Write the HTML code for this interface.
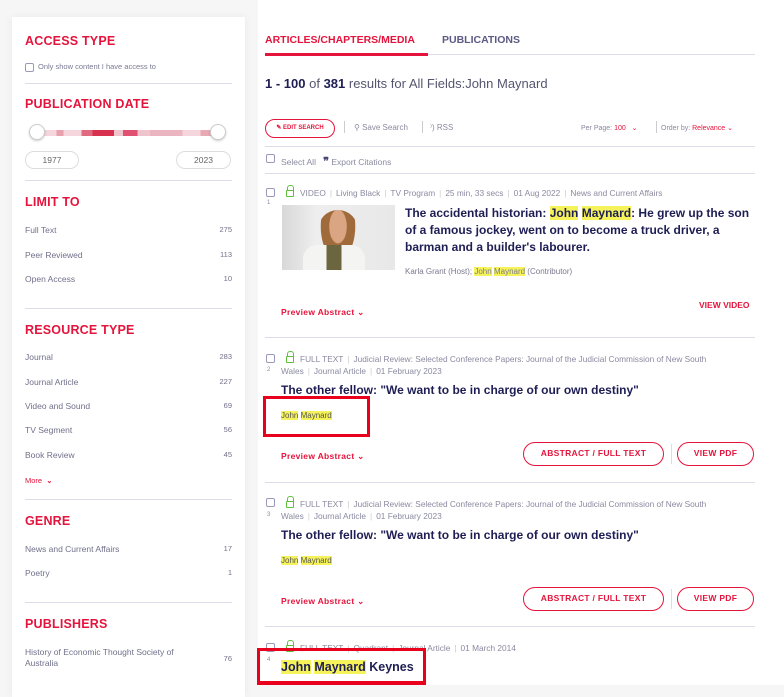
<!DOCTYPE html>
<html><head><meta charset="utf-8"><style>
*{margin:0;padding:0;box-sizing:border-box}
body{width:784px;height:685px;overflow:hidden;background:#f6f6f7;font-family:"Liberation Sans",sans-serif;position:relative;color:#6b6b85}
.a{position:absolute;white-space:nowrap}
#side{position:absolute;left:12px;top:17px;width:233px;height:680px;background:#fff;box-shadow:0 0 8px rgba(0,0,0,.06)}
#main{position:absolute;left:258px;top:0;width:526px;height:685px;background:#fff}
.h{position:absolute;left:13px;font-weight:bold;color:#e5143c;font-size:12.5px;letter-spacing:.2px}
.it{position:absolute;left:13px;width:207px;font-size:8.5px;color:#70708a;display:flex;justify-content:space-between}
.it span:last-child{font-size:7.5px}
.dv{position:absolute;left:13px;width:207px;height:1px;background:#dcdcea}
.ml{position:absolute;height:1px;background:#dcdcea}
.cb{position:absolute;width:9px;height:9px;border:1.3px solid #9a9ab8;border-radius:2px}
.meta{font-size:8.3px;color:#8a8aa0}
.meta i{font-style:normal;color:#ccc;margin:0 4px}
.ttl{font-weight:bold;color:#1e1e55;font-size:12px}
.hl{background:#f6f35a}
.pv{font-size:8.5px;color:#e5143c;font-weight:bold;letter-spacing:.3px}
.btn{position:absolute;height:24px;border:1.5px solid #e5143c;border-radius:12px;color:#e5143c;font-weight:bold;font-size:8.5px;text-align:center;line-height:21px;letter-spacing:.3px}
.lock{display:inline-block;width:8px;height:7px;border:1.5px solid #5fbf3a;border-radius:1px;position:relative;margin-right:6px;vertical-align:-1px}
.lock:before{content:"";position:absolute;left:0;top:-6px;width:5px;height:5px;border:1.5px solid #5fbf3a;border-bottom:none;border-radius:3px 3px 0 0}
.red{position:absolute;border:3.5px solid #e8001c}
</style></head><body>
<div id="side">
<div class="h" style="top:17px">ACCESS TYPE</div>
<div class="cb" style="left:13px;top:46px"></div>
<div class="a" style="left:26px;top:45px;font-size:7.5px;color:#7a7a95">Only show content I have access to</div>
<div class="dv" style="top:66px"></div>
<div class="h" style="top:80px">PUBLICATION DATE</div>
<div class="a" style="left:30px;top:113px;width:180px;height:6px;background:linear-gradient(90deg,#f4d6dc 0 8%,#e8a0ae 8% 12%,#f4d6dc 12% 22%,#e06a80 22% 28%,#d8304f 28% 40%,#f0c4cc 40% 45%,#e05070 45% 53%,#f0c4cc 53% 60%,#eab5c0 60% 78%,#f4d6dc 78% 88%,#e8a8b4 88% 100%)"></div>
<div class="a" style="left:17px;top:107px;width:16px;height:16px;border-radius:50%;background:#fff;border:1px solid #ccc;box-shadow:0 1px 2px rgba(0,0,0,.2)"></div>
<div class="a" style="left:198px;top:107px;width:16px;height:16px;border-radius:50%;background:#fff;border:1px solid #ccc;box-shadow:0 1px 2px rgba(0,0,0,.2)"></div>
<div class="a" style="left:13px;top:134px;width:54px;height:18px;border:1px solid #ddd;border-radius:9px;font-size:8.5px;text-align:center;line-height:16px;color:#666">1977</div>
<div class="a" style="left:164px;top:134px;width:55px;height:18px;border:1px solid #ddd;border-radius:9px;font-size:8.5px;text-align:center;line-height:16px;color:#666">2023</div>
<div class="dv" style="top:163px"></div>
<div class="h" style="top:178px">LIMIT TO</div>
<div class="it" style="top:208px"><span>Full Text</span><span>275</span></div>
<div class="it" style="top:233px"><span>Peer Reviewed</span><span>113</span></div>
<div class="it" style="top:257px"><span>Open Access</span><span>10</span></div>
<div class="dv" style="top:291px"></div>
<div class="h" style="top:306px">RESOURCE TYPE</div>
<div class="it" style="top:335px"><span>Journal</span><span>283</span></div>
<div class="it" style="top:360px"><span>Journal Article</span><span>227</span></div>
<div class="it" style="top:384px"><span>Video and Sound</span><span>69</span></div>
<div class="it" style="top:408px"><span>TV Segment</span><span>56</span></div>
<div class="it" style="top:433px"><span>Book Review</span><span>45</span></div>
<div class="a" style="left:13px;top:459px;font-size:7.5px;color:#e5143c">More &nbsp;<b>⌄</b></div>
<div class="dv" style="top:482px"></div>
<div class="h" style="top:497px">GENRE</div>
<div class="it" style="top:527px"><span>News and Current Affairs</span><span>17</span></div>
<div class="it" style="top:551px"><span>Poetry</span><span>1</span></div>
<div class="dv" style="top:585px"></div>
<div class="h" style="top:600px">PUBLISHERS</div>
<div class="it" style="top:630px;line-height:11px"><span>History of Economic Thought Society of<br>Australia</span><span style="margin-top:6px">76</span></div>
</div>
<div id="main">
<div class="a" style="left:7px;top:34px;font-weight:bold;font-size:10.5px;color:#e5143c">ARTICLES/CHAPTERS/MEDIA</div>
<div class="a" style="left:184px;top:34px;font-weight:bold;font-size:10.5px;color:#5a5a85">PUBLICATIONS</div>
<div class="ml" style="left:7px;top:54px;width:490px"></div>
<div class="a" style="left:7px;top:53px;width:163px;height:2.5px;background:#e5143c"></div>
<div class="a" style="left:7px;top:76px;font-size:13px;color:#555570"><b style="color:#1e1e55">1 - 100</b> of <b style="color:#1e1e55">381</b> results for All Fields:John Maynard</div>
<div class="a" style="left:7px;top:119px;width:70px;height:19px;border:1.5px solid #e5143c;border-radius:10px;font-size:6px;font-weight:bold;color:#e5143c;text-align:center;line-height:16px">✎ EDIT SEARCH</div>
<div class="a" style="left:86px;top:121px;width:1px;height:12px;background:#ccc"></div>
<div class="a" style="left:96px;top:123px;font-size:8px;color:#8a8aa0">⚲ Save Search</div>
<div class="a" style="left:164px;top:121px;width:1px;height:12px;background:#ccc"></div>
<div class="a" style="left:172px;top:123px;font-size:8px;color:#8a8aa0">⁾) RSS</div>
<div class="a" style="left:323px;top:124px;font-size:7px;color:#8a8aa0">Per Page: <span style="color:#e5143c">100 &nbsp; ⌄</span></div>
<div class="a" style="left:398px;top:121px;width:1px;height:12px;background:#ccc"></div>
<div class="a" style="left:403px;top:124px;font-size:7px;color:#8a8aa0">Order by: <span style="color:#e5143c">Relevance ⌄</span></div>
<div class="ml" style="left:7px;top:146px;width:490px"></div>
<div class="cb" style="left:8px;top:154px"></div>
<div class="a" style="left:23px;top:155px;font-size:8.5px;color:#8a8aa0">Select All &nbsp; <b style="color:#4a4a7a;font-size:11px">❞</b> Export Citations</div>
<div class="ml" style="left:7px;top:173px;width:490px"></div>

<div class="cb" style="left:8px;top:188px"></div>
<div class="a meta" style="left:9px;top:200px;font-size:6px">1</div>
<div class="a meta" style="left:28px;top:188px"><span class="lock"></span>VIDEO<i>|</i>Living Black<i>|</i>TV Program<i>|</i>25 min, 33 secs<i>|</i>01 Aug 2022<i>|</i>News and Current Affairs</div>
<div class="a" style="left:24px;top:205px;width:113px;height:65px;background:linear-gradient(90deg,#d8d8d8,#eee 30%,#e8e8e8)"></div>
<div class="a" style="left:60px;top:210px;width:40px;height:55px;border-radius:20px 20px 4px 4px;background:radial-gradient(ellipse at 50% 30%,#d9a582 0 30%,#a06a3a 32% 60%,transparent 62%)"></div>
<div class="a" style="left:45px;top:245px;width:62px;height:25px;border-radius:14px 14px 0 0;background:linear-gradient(90deg,#f4f4f2 0 38%,#6b6640 38% 62%,#f4f4f2 62%)"></div>
<div class="a ttl" style="left:147px;top:205px;line-height:17px;white-space:normal;width:352px">The accidental historian: <span class="hl">John</span> <span class="hl">Maynard</span>: He grew up the son of a famous jockey, went on to become a truck driver, a barman and a builder's labourer.</div>
<div class="a" style="left:147px;top:267px;font-size:8px;color:#7a7a90">Karla Grant (Host); <span class="hl">John</span> <span class="hl">Maynard</span> (Contributor)</div>
<div class="a pv" style="left:23px;top:307px">Preview Abstract ⌄</div>
<div class="a" style="left:441px;top:300px;font-size:8.5px;font-weight:bold;color:#e5143c">VIEW VIDEO</div>
<div class="ml" style="left:7px;top:337px;width:490px"></div>

<div class="cb" style="left:8px;top:354px"></div>
<div class="a meta" style="left:9px;top:367px;font-size:6px">2</div>
<div class="a meta" style="left:28px;top:354px"><span class="lock"></span>FULL TEXT<i>|</i>Judicial Review: Selected Conference Papers: Journal of the Judicial Commission of New South</div>
<div class="a meta" style="left:23px;top:366px">Wales<i>|</i>Journal Article<i>|</i>01 February 2023</div>
<div class="a ttl" style="left:23px;top:383px">The other fellow: "We want to be in charge of our own destiny"</div>
<div class="a" style="left:23px;top:411px;font-size:8px;color:#555"><span class="hl">John</span> <span class="hl">Maynard</span></div>
<div class="red" style="left:5px;top:396px;width:107px;height:41px"></div>
<div class="a pv" style="left:23px;top:451px">Preview Abstract ⌄</div>
<div class="btn" style="left:265px;top:442px;width:141px">ABSTRACT / FULL TEXT</div>
<div class="a" style="left:413px;top:444px;width:1px;height:20px;background:#ddd"></div>
<div class="btn" style="left:419px;top:442px;width:77px">VIEW PDF</div>
<div class="ml" style="left:7px;top:482px;width:490px"></div>

<div class="cb" style="left:8px;top:498px"></div>
<div class="a meta" style="left:9px;top:512px;font-size:6px">3</div>
<div class="a meta" style="left:28px;top:499px"><span class="lock"></span>FULL TEXT<i>|</i>Judicial Review: Selected Conference Papers: Journal of the Judicial Commission of New South</div>
<div class="a meta" style="left:23px;top:511px">Wales<i>|</i>Journal Article<i>|</i>01 February 2023</div>
<div class="a ttl" style="left:23px;top:528px">The other fellow: "We want to be in charge of our own destiny"</div>
<div class="a" style="left:23px;top:556px;font-size:8px;color:#555"><span class="hl">John</span> <span class="hl">Maynard</span></div>
<div class="a pv" style="left:23px;top:596px">Preview Abstract ⌄</div>
<div class="btn" style="left:265px;top:587px;width:141px">ABSTRACT / FULL TEXT</div>
<div class="a" style="left:413px;top:589px;width:1px;height:20px;background:#ddd"></div>
<div class="btn" style="left:419px;top:587px;width:77px">VIEW PDF</div>
<div class="ml" style="left:7px;top:626px;width:490px"></div>

<div class="cb" style="left:8px;top:643px"></div>
<div class="a meta" style="left:9px;top:657px;font-size:6px">4</div>
<div class="a meta" style="left:28px;top:643px"><span class="lock"></span>FULL TEXT<i>|</i>Quadrant<i>|</i>Journal Article<i>|</i>01 March 2014</div>
<div class="a ttl" style="left:23px;top:660px;font-size:12.5px"><span class="hl">John</span> <span class="hl">Maynard</span> Keynes</div>
<div class="red" style="left:-1px;top:648px;width:169px;height:37px;border-bottom-width:4px"></div>
</div>
</body></html>
